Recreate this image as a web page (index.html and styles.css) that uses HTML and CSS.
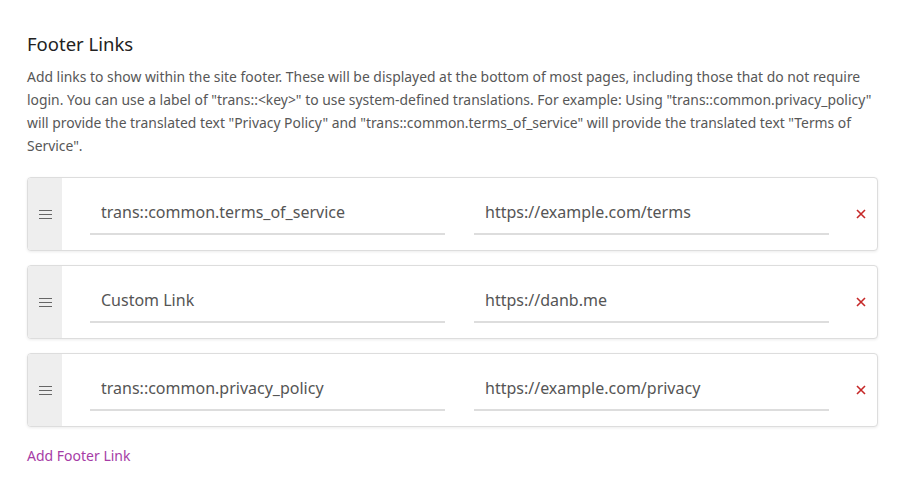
FILE: index.html
```html
<!DOCTYPE html>
<html lang="en">
<head>
    <meta charset="UTF-8">
    <meta name="viewport" content="width=device-width, initial-scale=1.0">
    <title>Footer Links</title>
    <link rel="stylesheet" href="styles.css">
</head>
<body>
    <section class="setting">
        <h2>Footer Links</h2>
        <p class="desc">Add links to show within the site footer. These will be displayed at the bottom of most pages, including those that do not require login. You can use a label of "trans::&lt;key&gt;" to use system-defined translations. For example: Using "trans::common.privacy_policy" will provide the translated text "Privacy Policy" and "trans::common.terms_of_service" will provide the translated text "Terms of Service".</p>

        <div class="link-list">
            <div class="link-row">
                <div class="handle"><span class="bars"></span></div>
                <div class="fields">
                    <input type="text" value="trans::common.terms_of_service">
                    <input type="text" value="https://example.com/terms">
                </div>
                <button class="remove" type="button" title="Remove">
                    <svg width="10" height="10" viewBox="0 0 10 10"><path d="M1 1L9 9M9 1L1 9" /></svg>
                </button>
            </div>
            <div class="link-row">
                <div class="handle"><span class="bars"></span></div>
                <div class="fields">
                    <input type="text" value="Custom Link">
                    <input type="text" value="https://danb.me">
                </div>
                <button class="remove" type="button" title="Remove">
                    <svg width="10" height="10" viewBox="0 0 10 10"><path d="M1 1L9 9M9 1L1 9" /></svg>
                </button>
            </div>
            <div class="link-row">
                <div class="handle"><span class="bars"></span></div>
                <div class="fields">
                    <input type="text" value="trans::common.privacy_policy">
                    <input type="text" value="https://example.com/privacy">
                </div>
                <button class="remove" type="button" title="Remove">
                    <svg width="10" height="10" viewBox="0 0 10 10"><path d="M1 1L9 9M9 1L1 9" /></svg>
                </button>
            </div>
        </div>

        <a class="add-link" href="#">Add Footer Link</a>
    </section>
</body>
</html>
```

FILE: styles.css
```css
body {
    margin: 0;
    background-color: #fff;
    font-family: 'Noto Sans', sans-serif;
    color: #222;
}
.setting {
    padding: 29px 30px 0 27px;
}
h2 {
    font-size: 18.5px;
    font-weight: 400;
    margin: 0 0 6px 0;
    line-height: 30px;
    color: #222;
}
.desc {
    font-size: 13.9px;
    line-height: 23px;
    color: #575757;
    margin: 0 0 20px 0;
}
.link-list {
    display: flex;
    flex-direction: column;
    gap: 14px;
}
.link-row {
    display: flex;
    align-items: stretch;
    border: 1px solid #ddd;
    border-radius: 4px;
    box-shadow: 0 1px 3px rgba(0,0,0,0.08);
    background-color: #fff;
    overflow: hidden;
}
.handle {
    width: 34px;
    background-color: #eee;
    display: flex;
    align-items: center;
    justify-content: center;
}
.bars {
    display: block;
    width: 13px;
    height: 9px;
    border-top: 1px solid #666;
    border-bottom: 1px solid #666;
    box-sizing: border-box;
    position: relative;
}
.bars::after {
    content: "";
    position: absolute;
    left: 0;
    right: 0;
    top: 3px;
    border-top: 1px solid #666;
}
.fields {
    flex: 1;
    display: flex;
    gap: 29px;
    padding: 15px 0 15px 28px;
}
.fields input {
    flex: 1;
    min-width: 0;
    height: 42px;
    box-sizing: border-box;
    border: none;
    border-bottom: 2px solid #ddd;
    padding: 0 11px 2px 11px;
    font-family: 'Noto Sans', sans-serif;
    font-size: 16px;
    color: #555;
    background: transparent;
    outline: none;
}
.remove {
    width: 48px;
    border: none;
    background: none;
    padding: 0 0 0 15px;
    display: flex;
    align-items: center;
    justify-content: center;
    cursor: pointer;
}
.remove svg {
    stroke: #c62828;
    stroke-width: 1.6;
    fill: none;
}
.add-link {
    display: inline-block;
    margin-top: 19px;
    font-size: 14px;
    color: #a63ca6;
    text-decoration: none;
}
```
